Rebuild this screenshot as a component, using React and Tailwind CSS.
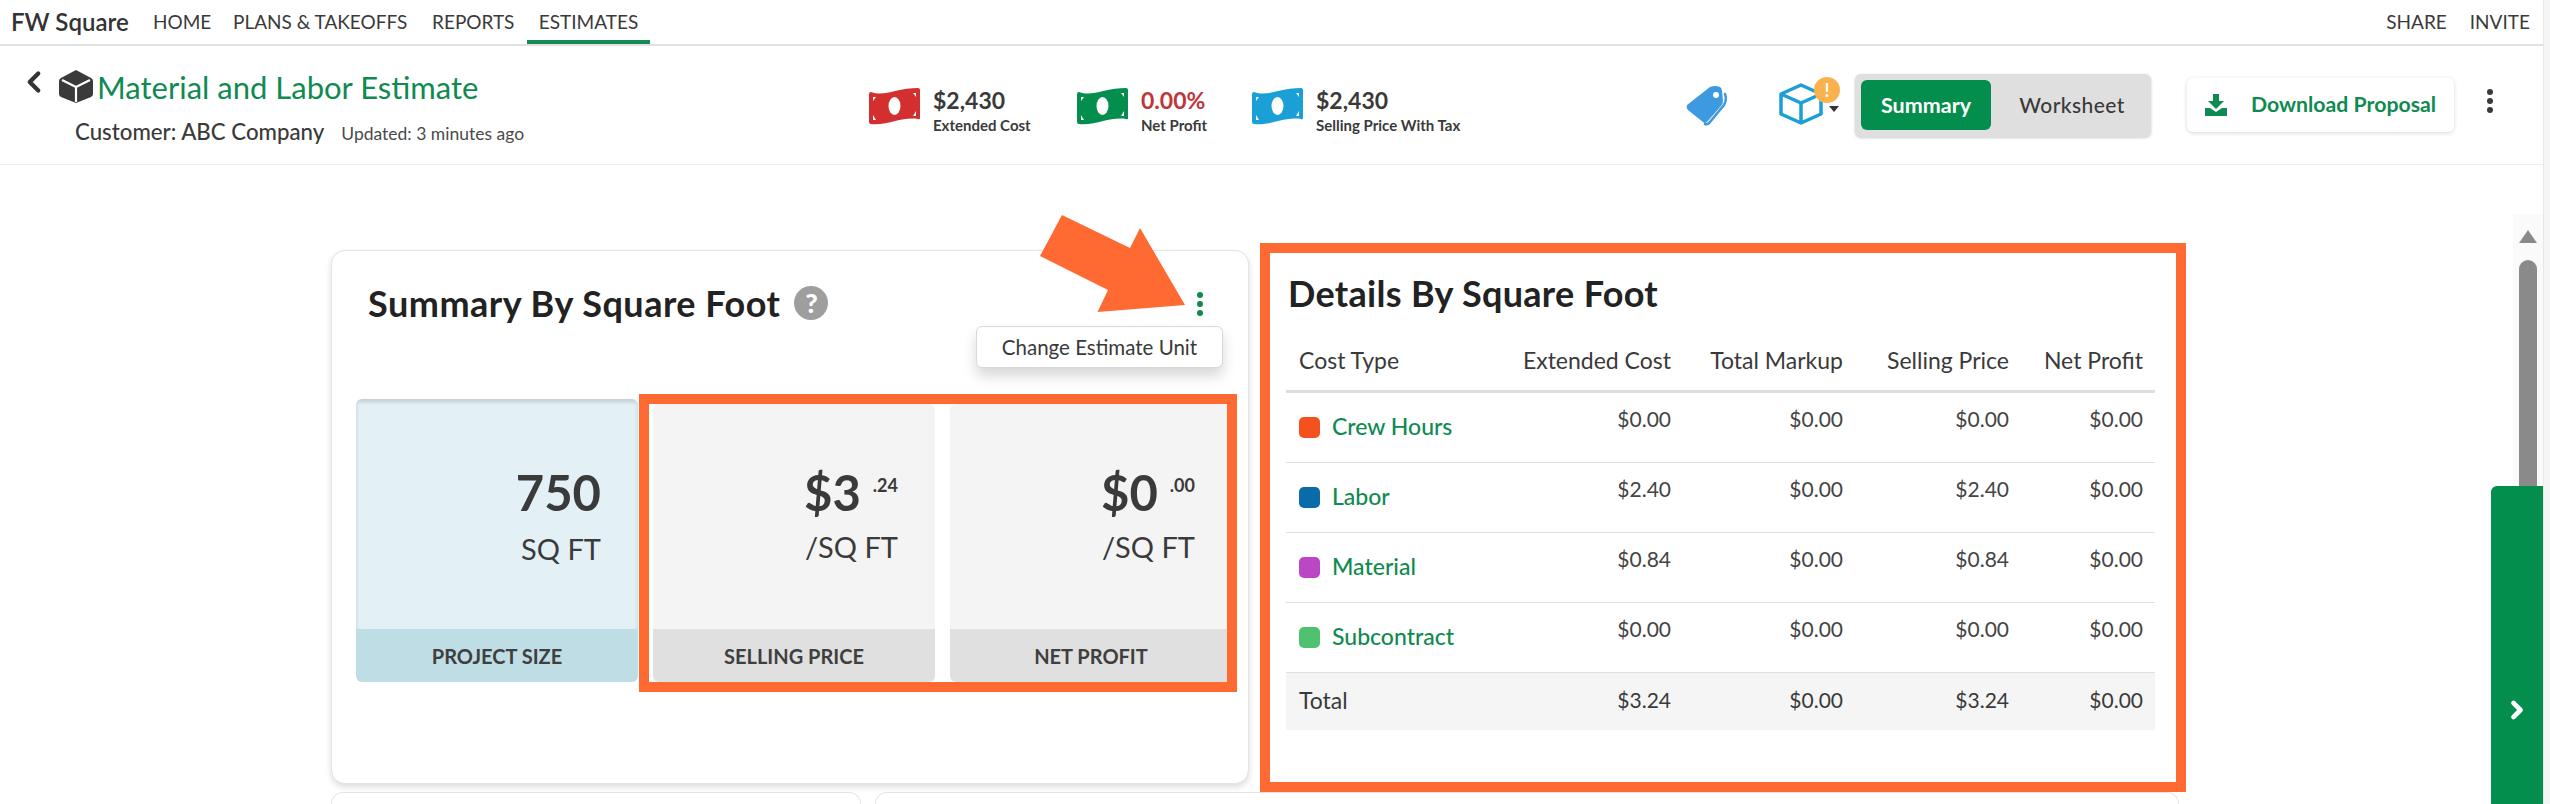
import React from "react";
import { ChevronLeft, ChevronRight } from "lucide-react";

const Bill = ({ color }) => (
  <svg width="51" height="37" viewBox="0 0 51 37">
    <path
      d="M0 6 Q0 4 2 4 C10 7 18 5 26 3 C34 1 42 0 49 0 Q51 0 51 2 L51 30 Q51 32 49 31 C42 30 34 31 26 33 C18 35 10 37 2 36 Q0 36 0 34 Z"
      fill={color}
    />
    <ellipse cx="25.5" cy="18" rx="6" ry="9" fill="#fff" />
    <path d="M4 9 L7 9 L4 13 Z M47 5 L47 9 L44 5 Z M4 27 L7 32 L4 32 Z M47 23 L47 28 L44 28 Z" fill="#fff" />
  </svg>
);

const Stat = ({ color, value, label, valueClass, className }) => (
  <div className={`flex items-start gap-[13px] ${className}`}>
    <div className="pt-[1px]">
      <Bill color={color} />
    </div>
    <div className="flex flex-col">
      <span className={`text-[23px] leading-[26px] font-bold ${valueClass}`}>{value}</span>
      <span className="mt-[2px] text-[15px] leading-[20px] font-bold text-[#3a3a3a] whitespace-nowrap">{label}</span>
    </div>
  </div>
);

const Dots = ({ color }) => (
  <div className="flex flex-col gap-[3px]">
    <span className="w-[6px] h-[6px] rounded-full" style={{ background: color }} />
    <span className="w-[6px] h-[6px] rounded-full" style={{ background: color }} />
    <span className="w-[6px] h-[6px] rounded-full" style={{ background: color }} />
  </div>
);

const Tile = ({ value, cents, unit, label, bodyClass, footClass, unitClass }) => (
  <div className="w-[282px] shrink-0 rounded-md overflow-hidden">
    <div className={`flex flex-col items-end pr-[37px] ${bodyClass}`}>
      <div className="flex items-start">
        <span className="text-[49px] leading-[50px] font-bold text-[#3a3a3a]">{value}</span>
        {cents && <span className="ml-[12px] mt-[8px] text-[18px] leading-[20px] font-bold text-[#3a3a3a]">{cents}</span>}
      </div>
      <span className={`text-[29px] leading-[32px] text-[#3a3a3a] ${unitClass}`}>{unit}</span>
    </div>
    <div className={`h-[53px] flex items-center justify-center text-[20px] font-bold text-[#3f3f3f] ${footClass}`}>{label}</div>
  </div>
);

const columns = "grid grid-cols-[200px_172px_172px_166px_134px] pl-[13px]";

const rows = [
  { name: "Crew Hours", swatch: "bg-[#f4511e]", values: ["$0.00", "$0.00", "$0.00", "$0.00"] },
  { name: "Labor", swatch: "bg-[#0b6aa8]", values: ["$2.40", "$0.00", "$2.40", "$0.00"] },
  { name: "Material", swatch: "bg-[#bb47c4]", values: ["$0.84", "$0.00", "$0.84", "$0.00"] },
  { name: "Subcontract", swatch: "bg-[#4fc26f]", values: ["$0.00", "$0.00", "$0.00", "$0.00"] },
];

const App = () => {
  return (
    <div className="relative flex w-[2550px] h-[804px] overflow-hidden bg-white text-[#3a3a3a] font-['Lato','Liberation_Sans',sans-serif]">
      <div className="w-[2543px] flex flex-col">
        {/* top nav */}
        <nav className="h-[46px] shrink-0 flex items-center border-b-2 border-[#e2e2e2] pl-[11px] pr-[13px]">
          <span className="text-[24px] font-semibold text-[#333] w-[142px]">FW Square</span>
          <div className="flex h-full text-[19px] text-[#3a3a3a]">
            <a className="w-[80px] flex items-center">HOME</a>
            <a className="w-[199px] flex items-center">PLANS &amp; TAKEOFFS</a>
            <a className="w-[95px] flex items-center">REPORTS</a>
            <a className="w-[123px] flex items-center justify-center border-b-[4px] border-[#168a57] pt-[4px]">ESTIMATES</a>
          </div>
          <div className="ml-auto flex gap-[23px] text-[19px]">
            <a>SHARE</a>
            <a>INVITE</a>
          </div>
        </nav>

        {/* estimate toolbar */}
        <header className="h-[119px] shrink-0 flex border-b border-[#eeeeee]">
          <div className="w-[869px] shrink-0 pl-[17px] pt-[21px]">
            <div className="flex items-start">
              <ChevronLeft size={34} strokeWidth={3} className="text-[#333] -mt-[2px]" />
              <svg width="34" height="33" viewBox="0 0 34 33" className="ml-[8px] mt-[3px]">
                <path d="M17 0 L32 8 Q34 9 34 11 L34 24 Q34 26 32 27 L17 33 L2 27 Q0 26 0 24 L0 11 Q0 9 2 8 Z" fill="#3a3a3a" />
                <path d="M3 10 L17 17 L31 10 M17 17 L17 32" fill="none" stroke="#fff" strokeWidth="2.2" />
              </svg>
              <h1 className="ml-[4px] mt-[1px] text-[31px] leading-[38px] text-[#0f8a50] whitespace-nowrap">Material and Labor Estimate</h1>
            </div>
            <div className="mt-[9px] pl-[58px] flex items-baseline">
              <span className="text-[22.25px] font-medium">Customer: ABC Company</span>
              <span className="ml-[17px] text-[17.5px] text-[#4a4a4a]">Updated: 3 minutes ago</span>
            </div>
          </div>

          <div className="flex pt-[41px]">
            <Stat color="#d32f2f" value="$2,430" label="Extended Cost" valueClass="text-[#3a3a3a]" className="w-[208px]" />
            <Stat color="#038e4e" value="0.00%" label="Net Profit" valueClass="text-[#c0343a]" className="w-[175px]" />
            <Stat color="#1a9fd6" value="$2,430" label="Selling Price With Tax" valueClass="text-[#3a3a3a]" className="w-[434px]" />
          </div>

          <svg width="42" height="40" viewBox="0 0 42 40" className="mt-[40px] shrink-0">
            <path d="M24 1 Q26 0 30 0 L34 1 Q36 2 36 5 L37 15 Q37 18 35 20 L21 36 Q19 38 17 36 L2 24 Q0 22 1 19 Z" fill="#3d99e0" />
            <circle cx="30" cy="9" r="3" fill="#fff" />
            <path d="M39 8 Q41 14 38 19 L24 36 Q22 39 19 38" fill="none" stroke="#3d99e0" strokeWidth="2.5" strokeLinecap="round" />
          </svg>

          <div className="relative ml-[51px] mt-[37px] w-[76px] shrink-0">
            <svg width="44" height="42" viewBox="0 0 44 42">
              <path d="M22 2 L42 11 L42 31 L22 40 L2 31 L2 11 Z M2 11 L22 20 L42 11 M22 20 L22 40" fill="none" stroke="#1a9fd6" strokeWidth="3.5" strokeLinejoin="round" />
            </svg>
            <span className="absolute left-[35px] top-[-6px] w-[26px] h-[26px] rounded-full bg-[#f9b24e] text-white text-[18px] font-bold flex items-center justify-center">!</span>
            <span className="absolute left-[50px] top-[23px] border-x-[5px] border-t-[6px] border-x-transparent border-t-[#333]" />
          </div>

          <div className="mt-[28px] h-[63px] w-[296px] shrink-0 rounded-md bg-[#dfdfdf] shadow-[0_1px_3px_rgba(0,0,0,0.2)] flex items-center pl-[6px] pb-[1px]">
            <div className="w-[130px] h-[50px] rounded-md bg-[#038e4e] text-white text-[21.5px] font-bold flex items-center justify-center">Summary</div>
            <div className="flex-1 pl-[2px] text-center text-[21px] font-medium tracking-[0.4px] text-[#3a3a3a]">Worksheet</div>
          </div>

          <button className="ml-[36px] mt-[32px] h-[54px] w-[267px] shrink-0 rounded-md bg-white shadow-[0_1px_4px_rgba(0,0,0,0.16)] flex items-center pl-[18px] pb-[1px] text-[21.25px] font-bold text-[#0f8a50]">
            <svg width="22" height="22" viewBox="0 0 22 22">
              <path d="M8 0 L14 0 L14 7 L19 7 L11 15 L3 7 L8 7 Z" fill="#0f8a50" />
              <path d="M0 14 L5 14 L11 18 L17 14 L22 14 L22 22 L0 22 Z" fill="#0f8a50" />
            </svg>
            <span className="ml-[24px] whitespace-nowrap">Download Proposal</span>
          </button>

          <div className="ml-[33px] mt-[43px]">
            <Dots color="#3a3a3a" />
          </div>
        </header>

        {/* page body */}
        <main className="relative flex-1 flex min-h-0">
          <div className="w-[2513px] shrink-0 pl-[331px] pt-[78px]">
            <div className="flex items-start">
              <section className="relative w-[918px] h-[534px] mt-[7px] shrink-0 rounded-[14px] border border-[#e4e4e4] bg-white shadow-[0_3px_6px_rgba(0,0,0,0.14)]">
                <div className="h-[143px] pl-[36px] pr-[45px] pt-[31px] flex items-start justify-between">
                  <div className="flex items-center">
                    <h2 className="text-[36px] leading-[42px] font-bold tracking-[0.5px] text-[#222] whitespace-nowrap">Summary By Square Foot</h2>
                    <span className="ml-[14px] w-[34px] h-[34px] rounded-full bg-[#9e9e9e] text-white text-[27px] font-black flex items-center justify-center">?</span>
                  </div>
                  <div className="pt-[10px]">
                    <Dots color="#0f8a50" />
                  </div>
                </div>

                <div className="absolute left-[644px] top-[75px] w-[247px] h-[42px] rounded-md border border-[#d8d8d8] bg-white shadow-[0_8px_14px_rgba(0,0,0,0.16)] flex items-center justify-center text-[20.5px] text-[#3a3a3a]">
                  Change Estimate Unit
                </div>

                <svg width="146" height="98" viewBox="0 0 146 98" className="absolute left-[708px] top-[-36px]">
                  <polygon points="145,90 100,13 90,33 22,0 0,41 68,75 57.5,97" fill="#ff6a33" />
                </svg>

                <div className="flex items-start pl-[24px]">
                  <div className="mt-[5px]">
                    <Tile
                      value="750"
                      unit="SQ FT"
                      label="PROJECT SIZE"
                      bodyClass="h-[230px] pt-[68px] bg-[#e3f0f5] shadow-[inset_0_3px_4px_rgba(0,0,0,0.14)]"
                      unitClass="mt-[16px]"
                      footClass="bg-[#bfdde4]"
                    />
                  </div>
                  <div className="ml-[1px] w-[598px] h-[298px] shrink-0 border-[10px] border-[#ff6a33] overflow-hidden flex gap-[15px] pl-[4px]">
                    <Tile
                      value="$3"
                      cents=".24"
                      unit="/SQ FT"
                      label="SELLING PRICE"
                      bodyClass="h-[225px] pt-[63px] bg-[#f4f4f4]"
                      unitClass="mt-[14px]"
                      footClass="bg-[#e0e0e0]"
                    />
                    <Tile
                      value="$0"
                      cents=".00"
                      unit="/SQ FT"
                      label="NET PROFIT"
                      bodyClass="h-[225px] pt-[63px] bg-[#f4f4f4]"
                      unitClass="mt-[14px]"
                      footClass="bg-[#e0e0e0]"
                    />
                  </div>
                </div>
              </section>

              <section className="ml-[11px] w-[926px] h-[549px] shrink-0 border-[10px] border-[#ff6a33] bg-white pl-[16px] pr-[21px]">
                <h2 className="h-[79px] flex items-center pl-[2px] text-[36px] font-bold tracking-[0.3px] text-[#222]">Details By Square Foot</h2>
                <div className={`${columns} h-[61px] items-center pb-[2px] border-b-[3px] border-[#dddddd] text-[23px] text-[#3a3a3a]`}>
                  <span className="whitespace-nowrap">Cost Type</span>
                  <span className="text-right whitespace-nowrap">Extended Cost</span>
                  <span className="text-right whitespace-nowrap">Total Markup</span>
                  <span className="text-right whitespace-nowrap">Selling Price</span>
                  <span className="text-right whitespace-nowrap">Net Profit</span>
                </div>
                {rows.map((row) => (
                  <div key={row.name} className={`${columns} h-[70px] items-center border-b border-[#e0e0e0]`}>
                    <div className="flex items-center gap-[12px]">
                      <span className={`w-[21px] h-[21px] rounded-[5px] ${row.swatch}`} />
                      <a className="pb-[2px] text-[23px] font-medium text-[#0f8a50]">{row.name}</a>
                    </div>
                    {row.values.map((value, i) => (
                      <span key={i} className="text-right text-[21px] text-[#444] pb-[18px]">{value}</span>
                    ))}
                  </div>
                ))}
                <div className={`${columns} h-[57px] items-center bg-[#f5f5f5] text-[#3a3a3a]`}>
                  <span className="pb-[2px] text-[23px]">Total</span>
                  <span className="pb-[3px] text-right text-[21px]">$3.24</span>
                  <span className="pb-[3px] text-right text-[21px]">$0.00</span>
                  <span className="pb-[3px] text-right text-[21px]">$3.24</span>
                  <span className="pb-[3px] text-right text-[21px]">$0.00</span>
                </div>
              </section>
            </div>

            <div className="flex gap-[14px]">
              <div className="w-[530px] h-[40px] rounded-t-xl border border-b-0 border-[#e4e4e4]" />
              <div className="w-[1304px] h-[40px] rounded-t-xl border border-b-0 border-[#e4e4e4]" />
            </div>
          </div>

          {/* inner scrollbar */}
          <div className="w-[30px] shrink-0 mt-[49px] bg-[#fafafa] flex flex-col items-center pt-[16px]">
            <span className="border-x-[9px] border-b-[13px] border-x-transparent border-b-[#8a8a8a]" />
            <span className="mt-[17px] w-[18px] h-[240px] rounded-t-[9px] bg-[#8a8a8a]" />
          </div>

          {/* side panel tab */}
          <div className="absolute right-0 top-[321px] w-[52px] h-[318px] rounded-tl-md bg-[#038e4e] flex justify-center pt-[210px] text-white">
            <ChevronRight size={28} strokeWidth={4} />
          </div>
        </main>
      </div>
      <div className="w-[7px] shrink-0 bg-[#f5f5f5] border-l border-[#e8e8e8]" />
    </div>
  );
};

export default App;
